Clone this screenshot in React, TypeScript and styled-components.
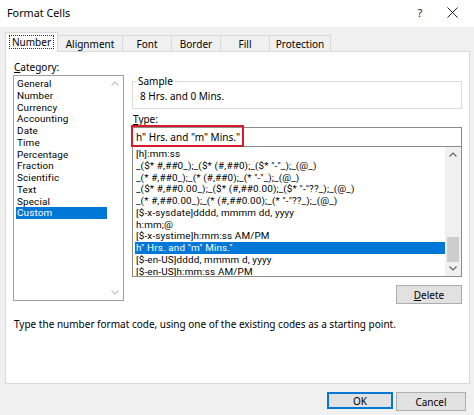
import React from "react";
import styled, { createGlobalStyle } from "styled-components";

const Global = createGlobalStyle`
  html, body { margin: 0; padding: 0; background: #f0f0f0; }
  body { font-family: "Noto Sans", "Open Sans", sans-serif; font-size: 10px; color: #000; }
  * { box-sizing: border-box; }
`;

const Window = styled.div`
  width: 474px;
  height: 415px;
  background: #f0f0f0;
  display: flex;
  flex-direction: column;
  overflow: hidden;
`;

const TitleBar = styled.div`
  height: 27px;
  background: #ffffff;
  display: flex;
  align-items: center;
  padding: 0 0 2px 7px;
  font-size: 10.8px;
  color: #000;
`;

const TitleText = styled.div`
  flex: 1;
`;

const TitleButton = styled.div<{ $w: number }>`
  width: ${(p) => p.$w}px;
  display: flex;
  align-items: center;
  justify-content: center;
  font-size: 11px;
  color: #222;
`;

const Body = styled.div`
  flex: 1;
  display: flex;
  flex-direction: column;
  padding: 5px 4px 0 5px;
`;

const TabStrip = styled.div`
  display: flex;
  align-items: flex-end;
  height: 20px;
  position: relative;
  z-index: 1;
  margin-bottom: -1px;
`;

const Tab = styled.div<{ $w: number; $active?: boolean }>`
  width: ${(p) => p.$w}px;
  height: ${(p) => (p.$active ? 20 : 17)}px;
  background: ${(p) => (p.$active ? "#ffffff" : "#f0f0f0")};
  border: 1px solid #d9d9d9;
  border-bottom: ${(p) => (p.$active ? "none" : "1px solid #d9d9d9")};
  margin-left: ${(p) => (p.$active ? 0 : -1)}px;
  display: flex;
  align-items: center;
  justify-content: center;
  padding-bottom: ${(p) => (p.$active ? 1 : 0)}px;
  font-size: 10px;
`;

const FocusLabel = styled.span`
  border: 1px dotted #333;
  padding: 0 2px;
  line-height: 12px;
`;

const Panel = styled.div`
  height: 333px;
  background: #ffffff;
  border: 1px solid #d9d9d9;
  display: flex;
  flex-direction: column;
  padding: 9px 4px 0 7px;
`;

const Columns = styled.div`
  display: grid;
  grid-template-columns: 111px 330px;
  column-gap: 8px;
  align-items: start;
`;

const Column = styled.div<{ $top?: number }>`
  display: flex;
  flex-direction: column;
  padding-top: ${(p) => p.$top ?? 0}px;
`;

const Label = styled.div`
  height: 14px;
  line-height: 13px;
  font-size: 10px;
  padding-left: 1px;
`;

const Underline = styled.span`
  text-decoration: underline;
  text-underline-offset: 1px;
`;

const ListBox = styled.div<{ $h: number; $dark?: boolean }>`
  height: ${(p) => p.$h}px;
  border: 1px solid ${(p) => (p.$dark ? "#8c8c8c" : "#a0a0a0")};
  background: #fff;
  display: flex;
`;

const Items = styled.div<{ $padTop: number }>`
  flex: 1;
  padding: ${(p) => p.$padTop}px 0 0 2px;
  overflow: hidden;
`;

const Item = styled.div<{ $selected?: boolean; $pad?: number }>`
  height: 11.75px;
  line-height: 11.75px;
  padding-left: ${(p) => p.$pad ?? 1}px;
  white-space: nowrap;
  background: ${(p) => (p.$selected ? "#0078d7" : "transparent")};
  color: ${(p) => (p.$selected ? "#ffffff" : "#000")};
  font-family: Roboto, "Noto Sans", sans-serif;
  font-size: 9.9px;
  letter-spacing: 0.15px;
`;

const ScrollBar = styled.div<{ $track: string }>`
  width: 16px;
  background: ${(p) => p.$track};
  display: flex;
  flex-direction: column;
  align-items: center;
`;

const ArrowBox = styled.div`
  height: 15px;
  width: 100%;
  display: flex;
  align-items: center;
  justify-content: center;
`;

const Track = styled.div`
  flex: 1;
  width: 100%;
  display: flex;
  flex-direction: column;
  padding: 0 2px;
`;

const Thumb = styled.div<{ $top: number; $h: number }>`
  margin-top: ${(p) => p.$top}px;
  height: ${(p) => p.$h}px;
  background: #cdcdcd;
`;

const Fieldset = styled.div`
  position: relative;
  height: 28px;
  border: 1px solid #dcdcdc;
  padding: 8px 0 0 7px;
  line-height: 12px;
  font-size: 10px;
`;

const Legend = styled.span`
  position: absolute;
  top: -7px;
  left: 3px;
  background: #fff;
  padding: 0 2px;
  line-height: 12px;
  font-size: 10px;
`;

const TypeLabel = styled.div`
  margin-top: 3px;
  height: 15px;
  line-height: 14px;
  font-size: 10px;
  padding-left: 1px;
`;

const InputWrap = styled.div`
  position: relative;
  height: 19px;
  border: 1px solid #8c8c8c;
  border-bottom: none;
  display: flex;
  align-items: center;
  padding-left: 3px;
  font-size: 10px;
`;

const Highlight = styled.div`
  position: absolute;
  left: -2px;
  top: -3px;
  width: 113px;
  height: 22px;
  border: 2px solid #d81b2b;
`;

const ButtonRow = styled.div<{ $justify: string; $top: number; $gap?: number }>`
  display: flex;
  justify-content: ${(p) => p.$justify};
  margin-top: ${(p) => p.$top}px;
  gap: ${(p) => p.$gap ?? 0}px;
`;

const Button = styled.div<{ $w: number; $default?: boolean }>`
  width: ${(p) => p.$w}px;
  height: ${(p) => (p.$default ? 17 : 19)}px;
  background: #e1e1e1;
  border: ${(p) => (p.$default ? "2px solid #0078d7" : "1px solid #adadad")};
  display: flex;
  align-items: center;
  justify-content: center;
  font-size: 10px;
  color: #000;
`;

const HelpText = styled.div`
  margin-top: 14px;
  line-height: 13px;
  font-size: 10px;
  padding-left: 1px;
`;

const Footer = styled.div`
  display: flex;
  justify-content: flex-end;
  gap: 3px;
  margin-top: 8px;
  padding-right: 4px;
`;

const Chevron = ({ up, color }: { up?: boolean; color: string }) => (
  <svg width="8" height="5" viewBox="0 0 8 5">
    <path
      d={up ? "M0.5 4.5 L4 1 L7.5 4.5" : "M0.5 0.5 L4 4 L7.5 0.5"}
      fill="none"
      stroke={color}
      strokeWidth="1.1"
    />
  </svg>
);

const CloseIcon = () => (
  <svg width="11" height="11" viewBox="0 0 11 11">
    <path d="M0.5 0.5 L10.5 10.5 M10.5 0.5 L0.5 10.5" stroke="#222" strokeWidth="1" />
  </svg>
);

const tabs = [
  { name: "Number", w: 53 },
  { name: "Alignment", w: 66 },
  { name: "Font", w: 50 },
  { name: "Border", w: 50 },
  { name: "Fill", w: 50 },
  { name: "Protection", w: 62 },
];

const categories = [
  "General",
  "Number",
  "Currency",
  "Accounting",
  "Date",
  "Time",
  "Percentage",
  "Fraction",
  "Scientific",
  "Text",
  "Special",
  "Custom",
];

const formats = [
  "[h]:mm:ss",
  '_($* #,##0_);_($* (#,##0);_($* "-"_);_(@_)',
  '_(* #,##0_);_(* (#,##0);_(* "-"_);_(@_)',
  '_($* #,##0.00_);_($* (#,##0.00);_($* "-"??_);_(@_)',
  '_(* #,##0.00_);_(* (#,##0.00);_(* "-"??_);_(@_)',
  "[$-x-sysdate]dddd, mmmm dd, yyyy",
  "h:mm;@",
  "[$-x-systime]h:mm:ss AM/PM",
  'h" Hrs. and "m" Mins."',
  "[$-en-US]dddd, mmmm d, yyyy",
  "[$-en-US]h:mm:ss AM/PM",
];

export default function App() {
  return (
    <>
      <Global />
      <Window>
        <TitleBar>
          <TitleText>Format Cells</TitleText>
          <TitleButton $w={20}>?</TitleButton>
          <TitleButton $w={44}>
            <CloseIcon />
          </TitleButton>
        </TitleBar>
        <Body>
          <TabStrip>
            {tabs.map((t, i) => (
              <Tab key={t.name} $w={t.w} $active={i === 0}>
                {i === 0 ? <FocusLabel>{t.name}</FocusLabel> : t.name}
              </Tab>
            ))}
          </TabStrip>
          <Panel>
            <Columns>
              <Column>
                <Label>
                  <Underline>C</Underline>ategory:
                </Label>
                <ListBox $h={226}>
                  <Items $padTop={2}>
                    {categories.map((c) => (
                      <Item key={c} $selected={c === "Custom"}>
                        {c}
                      </Item>
                    ))}
                  </Items>
                  <ScrollBar $track="#ffffff">
                    <ArrowBox>
                      <Chevron up color="#c2c2c2" />
                    </ArrowBox>
                    <Track />
                    <ArrowBox>
                      <Chevron color="#c2c2c2" />
                    </ArrowBox>
                  </ScrollBar>
                </ListBox>
              </Column>
              <Column $top={20}>
                <Fieldset>
                  <Legend>Sample</Legend>8 Hrs. and 0 Mins.
                </Fieldset>
                <TypeLabel>
                  <Underline>T</Underline>ype:
                </TypeLabel>
                <InputWrap>
                  h" Hrs. and "m" Mins."
                  <Highlight />
                </InputWrap>
                <ListBox $h={131} $dark>
                  <Items $padTop={1}>
                    {formats.map((f, i) => (
                      <Item key={i} $selected={i === 8} $pad={1}>
                        {f}
                      </Item>
                    ))}
                  </Items>
                  <ScrollBar $track="#f0f0f0">
                    <ArrowBox>
                      <Chevron up color="#606060" />
                    </ArrowBox>
                    <Track>
                      <Thumb $top={75} $h={25} />
                    </Track>
                    <ArrowBox>
                      <Chevron color="#606060" />
                    </ArrowBox>
                  </ScrollBar>
                </ListBox>
                <ButtonRow $justify="flex-end" $top={8}>
                  <Button $w={66}>
                    <Underline>D</Underline>elete
                  </Button>
                </ButtonRow>
              </Column>
            </Columns>
            <HelpText>
              Type the number format code, using one of the existing codes as a starting point.
            </HelpText>
          </Panel>
          <Footer>
            <Button $w={66} $default>
              OK
            </Button>
            <Button $w={70}>Cancel</Button>
          </Footer>
        </Body>
      </Window>
    </>
  );
}
